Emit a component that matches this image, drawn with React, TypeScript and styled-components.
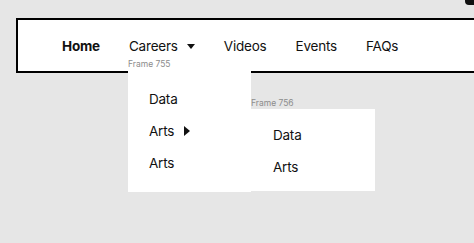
import styled, {createGlobalStyle} from "styled-components";

const GlobalStyle = createGlobalStyle`
  html, body {
    margin: 0;
    padding: 0;
    background: #e6e6e6;
    overflow: hidden;
  }
  body {
    font-family: Inter, "Noto Sans", sans-serif;
    color: #111;
    letter-spacing: -0.2px;
  }
`;

const Page = styled.div`
  position: relative;
  width: 474px;
  height: 243px;
  padding: 18px 0 0 16px;
  box-sizing: border-box;
  overflow: hidden;
`;

const CornerBlob = styled.div`
  position: absolute;
  top: -10px;
  right: -10px;
  width: 19px;
  height: 15px;
  border-radius: 4px;
  background: #111;
`;

const NavBar = styled.nav`
  width: 480px;
  height: 55px;
  box-sizing: border-box;
  border: 2px solid #000;
  background: #fff;
  display: flex;
  align-items: center;
  gap: 29px;
  padding-left: 44px;
`;

const NavItem = styled.div<{ $bold?: boolean }>`
  position: relative;
  display: flex;
  align-items: center;
  font-size: 13.5px;
  font-weight: ${p => (p.$bold ? 700 : 400)};
  line-height: 20px;
  margin-top: 1px;
`;

const DownTriangle = styled.span`
  width: 0;
  height: 0;
  margin-left: 9px;
  margin-top: 1px;
  border-left: 4.5px solid transparent;
  border-right: 4.5px solid transparent;
  border-top: 5px solid #111;
`;

const RightTriangle = styled.span`
  width: 0;
  height: 0;
  margin-left: 10px;
  border-top: 5px solid transparent;
  border-bottom: 5px solid transparent;
  border-left: 6px solid #111;
`;

const FrameLabel = styled.span`
  position: absolute;
  left: 0;
  bottom: 100%;
  font-size: 8.5px;
  line-height: 11px;
  letter-spacing: 0;
  color: #8c8c8c;
  white-space: nowrap;
`;

const Dropdown = styled.div`
  position: absolute;
  left: -1px;
  top: 34px;
  width: 123px;
  box-sizing: border-box;
  background: #fff;
  padding: 13px 0 13px;
  font-weight: 400;
`;

const SubMenu = styled.div`
  position: absolute;
  left: 100%;
  top: 39px;
  width: 124px;
  box-sizing: border-box;
  background: #fff;
  padding: 10px 0 8px;
`;

const MenuItem = styled.div<{ $indent: number }>`
  display: flex;
  align-items: center;
  height: 32px;
  padding-left: ${p => p.$indent}px;
  font-size: 13.5px;
`;

export default function App() {
    return (
        <Page>
            <GlobalStyle/>
            <CornerBlob/>
            <NavBar>
                <NavItem $bold>Home</NavItem>
                <NavItem>
                    Careers
                    <DownTriangle/>
                    <Dropdown>
                        <FrameLabel>Frame 755</FrameLabel>
                        <MenuItem $indent={21}>Data</MenuItem>
                        <MenuItem $indent={21}>Arts<RightTriangle/></MenuItem>
                        <MenuItem $indent={21}>Arts</MenuItem>
                        <SubMenu>
                            <FrameLabel>Frame 756</FrameLabel>
                            <MenuItem $indent={22}>Data</MenuItem>
                            <MenuItem $indent={22}>Arts</MenuItem>
                        </SubMenu>
                    </Dropdown>
                </NavItem>
                <NavItem>Videos</NavItem>
                <NavItem>Events</NavItem>
                <NavItem>FAQs</NavItem>
            </NavBar>
        </Page>
    )
}
